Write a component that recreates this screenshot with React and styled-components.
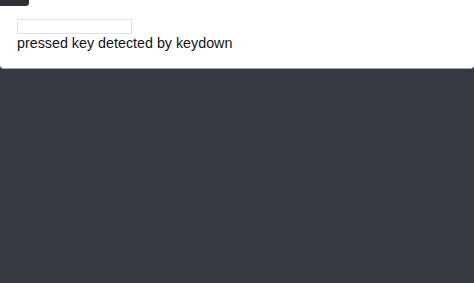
import React from "react";
import styled, { createGlobalStyle } from "styled-components";

const Global = createGlobalStyle`
  html, body { margin: 0; padding: 0; height: 100%; }
  body { background: #363a42; font-family: "Liberation Sans", Arial, sans-serif; }
  #root { height: 100%; }
`;

const Page = styled.div`
  position: relative;
  height: 100%;
`;

const Tab = styled.div`
  position: absolute;
  top: 0;
  left: 0;
  width: 29px;
  height: 6px;
  background: #2e3136;
  border-bottom-right-radius: 3px;
  z-index: 2;
`;

const Panel = styled.div`
  background: #ffffff;
  height: 69px;
  box-sizing: border-box;
  padding: 19px 17px 0;
  border-bottom: 1px solid #a4a7ab;
  border-radius: 0 0 4px 4px;
  display: flex;
  flex-direction: column;
  align-items: flex-start;
`;

const KeyInput = styled.input`
  box-sizing: border-box;
  width: 115px;
  height: 15px;
  border: 1px solid #e2e2e2;
  padding: 0;
  margin: 0;
  outline: none;
`;

const Label = styled.div`
  font-size: 14.3px;
  color: #111;
  line-height: 17px;
  margin-top: 1px;
`;

export default function App() {
  return (
    <Page>
      <Global />
      <Tab />
      <Panel>
        <KeyInput />
        <Label>pressed key detected by keydown</Label>
      </Panel>
    </Page>
  );
}
